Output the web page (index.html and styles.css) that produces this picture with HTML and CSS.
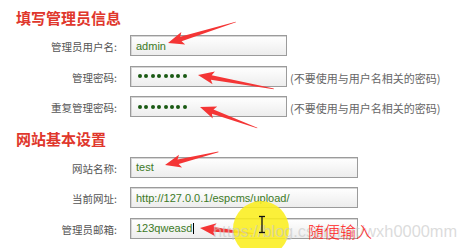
FILE: index.html
```html
<!DOCTYPE html>
<html lang="zh-CN">
<head>
<meta charset="utf-8">
<title>安装设置</title>
<link rel="stylesheet" href="styles.css">
</head>
<body>
<div class="page">
  <h2 class="sec">填写管理员信息</h2>
  <div class="rows">
    <div class="row"><span class="lbl">管理员用户名:</span><div class="field short">admin</div></div>
    <div class="row"><span class="lbl">管理密码:</span><div class="field short"><span class="dots"><i></i><i></i><i></i><i></i><i></i><i></i><i></i><i></i></span></div><span class="hint">(不要使用与用户名相关的密码)</span></div>
    <div class="row"><span class="lbl">重复管理密码:</span><div class="field short"><span class="dots"><i></i><i></i><i></i><i></i><i></i><i></i><i></i><i></i></span></div><span class="hint">(不要使用与用户名相关的密码)</span></div>
  </div>
  <h2 class="sec sec2">网站基本设置</h2>
  <div class="rows">
    <div class="row"><span class="lbl">网站名称:</span><div class="field long">test</div></div>
    <div class="row"><span class="lbl">当前网址:</span><div class="field long">http://127.0.0.1/espcms/upload/</div></div>
    <div class="row"><span class="lbl">管理员邮箱:</span><div class="field long">123qweasd<span class="caret"></span></div></div>
  </div>
</div>
<svg class="overlay" width="466" height="248" viewBox="0 0 466 248">
  <g class="arrow">
    <path transform="translate(168 43) rotate(-17.2)" d="M0,0 L16,-6.5 L13.5,-2.3 L71,-0.3 L71,0.3 L13.5,2.3 L16,6.5 Z"/>
    <path transform="translate(198 75) rotate(10.4)" d="M0,0 L16,-6.5 L13.5,-2.3 L77,-0.3 L77,0.3 L13.5,2.3 L16,6.5 Z"/>
    <path transform="translate(200 107) rotate(20.2)" d="M0,0 L16,-6.5 L13.5,-2.3 L61,-0.3 L61,0.3 L13.5,2.3 L16,6.5 Z"/>
    <path transform="translate(165 165) rotate(-13.8)" d="M0,0 L16,-6.5 L13.5,-2.3 L55,-0.3 L55,0.3 L13.5,2.3 L16,6.5 Z"/>
    <path transform="translate(200 228) rotate(6)" d="M0,0 L16,-6.5 L13.5,-2.3 L54,-0.3 L54,0.3 L13.5,2.3 L16,6.5 Z"/>
  </g>
  <circle class="spot" cx="261" cy="229" r="28"/>
  <text class="wm" x="213" y="237">https://blog.csdn.net/wxh0000mm</text>
  <text class="note" x="308" y="238">随便输入</text>
  <g class="ibeam">
    <line x1="262" y1="217" x2="262" y2="232"/>
    <line x1="259" y1="216.5" x2="265" y2="216.5"/>
    <line x1="259" y1="232.5" x2="265" y2="232.5"/>
  </g>
</svg>
</body>
</html>
```
FILE: styles.css
```css
html, body {
  margin: 0;
  padding: 0;
  background: #fff;
}
body {
  width: 466px;
  height: 248px;
  overflow: hidden;
  position: relative;
  font-family: "Noto Sans CJK SC", "Liberation Sans", sans-serif;
}
.page {
  padding-top: 9.5px;
}
.sec {
  margin: 0 0 0 16px;
  font-size: 15px;
  line-height: 15px;
  font-weight: bold;
  color: #e0372c;
}
.sec2 {
  margin-top: 14px;
}
.rows {
  display: flex;
  flex-direction: column;
  gap: 9.5px;
  margin-top: 10.5px;
}
.row {
  display: flex;
  align-items: center;
  height: 21px;
}
.lbl {
  width: 117px;
  text-align: right;
  padding-top: 2px;
  font-size: 10.5px;
  color: #555;
  margin-right: 13px;
  white-space: nowrap;
}
.field {
  box-sizing: border-box;
  height: 21px;
  border: 1px solid #9b9b9b;
  box-shadow: inset 1px 1px 0 #d6d6d6;
  background: linear-gradient(#ffffff, #ededed);
  padding: 0 5px;
  display: flex;
  align-items: center;
  font-family: "Liberation Sans", Arial, sans-serif;
  font-size: 11px;
  color: #3c7a26;
  white-space: nowrap;
  overflow: hidden;
}
.short { width: 157px; }
.long { width: 228px; }
.dots {
  display: flex;
  gap: 2.4px;
  padding-left: 2px;
}
.dots i {
  width: 4px;
  height: 4px;
  border-radius: 50%;
  background: #1a5a14;
}
.caret {
  display: inline-block;
  width: 1px;
  height: 11px;
  margin-left: 1px;
  background: #000;
}
.hint {
  margin-left: 3px;
  padding-top: 3px;
  font-size: 11px;
  color: #666;
  white-space: nowrap;
}
.overlay {
  position: absolute;
  left: 0;
  top: 0;
  pointer-events: none;
}
.arrow path {
  fill: #f43535;
}
.spot {
  fill: rgba(250, 238, 30, 0.88);
}
.wm {
  font-family: "Liberation Sans", Arial, sans-serif;
  font-size: 16.4px;
  fill: rgba(200, 200, 200, 0.65);
}
.note {
  font-family: "Noto Sans CJK SC", sans-serif;
  font-size: 16px;
  font-weight: 300;
  fill: #ff2424;
}
.ibeam line {
  stroke: #111;
  stroke-width: 1.3;
}
```
